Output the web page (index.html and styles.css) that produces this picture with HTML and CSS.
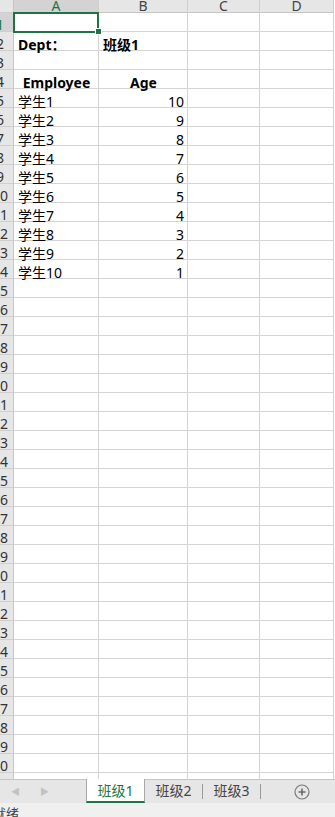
FILE: index.html
```html
<!DOCTYPE html>
<html>
<head>
  <title>班级1 - Sheet</title>
  <link rel="stylesheet" href="styles.css">
</head>
<body>
  <div class="sheet">
    <div class="row head-row">
      <div class="cell rh corner"></div>
      <div class="cell ch col-a selected-head">A</div>
      <div class="cell ch col-b">B</div>
      <div class="cell ch col-c">C</div>
      <div class="cell ch col-d">D</div>
    </div>

    <div class="row">
      <div class="cell rh selected-head"><span>1</span></div>
      <div class="cell col-a active-cell"></div>
      <div class="cell col-b"></div>
      <div class="cell col-c"></div>
      <div class="cell col-d"></div>
    </div>
    <div class="row">
      <div class="cell rh"><span>2</span></div>
      <div class="cell col-a bold">Dept：</div>
      <div class="cell col-b bold">班级1</div>
      <div class="cell col-c"></div>
      <div class="cell col-d"></div>
    </div>
    <div class="row">
      <div class="cell rh"><span>3</span></div>
      <div class="cell col-a"></div>
      <div class="cell col-b"></div>
      <div class="cell col-c"></div>
      <div class="cell col-d"></div>
    </div>
    <div class="row">
      <div class="cell rh"><span>4</span></div>
      <div class="cell col-a bold center">Employee</div>
      <div class="cell col-b bold center">Age</div>
      <div class="cell col-c"></div>
      <div class="cell col-d"></div>
    </div>
    <div class="row"><div class="cell rh"><span>5</span></div><div class="cell col-a">学生1</div><div class="cell col-b num">10</div><div class="cell col-c"></div><div class="cell col-d"></div></div>
    <div class="row"><div class="cell rh"><span>6</span></div><div class="cell col-a">学生2</div><div class="cell col-b num">9</div><div class="cell col-c"></div><div class="cell col-d"></div></div>
    <div class="row"><div class="cell rh"><span>7</span></div><div class="cell col-a">学生3</div><div class="cell col-b num">8</div><div class="cell col-c"></div><div class="cell col-d"></div></div>
    <div class="row"><div class="cell rh"><span>8</span></div><div class="cell col-a">学生4</div><div class="cell col-b num">7</div><div class="cell col-c"></div><div class="cell col-d"></div></div>
    <div class="row"><div class="cell rh"><span>9</span></div><div class="cell col-a">学生5</div><div class="cell col-b num">6</div><div class="cell col-c"></div><div class="cell col-d"></div></div>
    <div class="row"><div class="cell rh"><span>10</span></div><div class="cell col-a">学生6</div><div class="cell col-b num">5</div><div class="cell col-c"></div><div class="cell col-d"></div></div>
    <div class="row"><div class="cell rh"><span>11</span></div><div class="cell col-a">学生7</div><div class="cell col-b num">4</div><div class="cell col-c"></div><div class="cell col-d"></div></div>
    <div class="row"><div class="cell rh"><span>12</span></div><div class="cell col-a">学生8</div><div class="cell col-b num">3</div><div class="cell col-c"></div><div class="cell col-d"></div></div>
    <div class="row"><div class="cell rh"><span>13</span></div><div class="cell col-a">学生9</div><div class="cell col-b num">2</div><div class="cell col-c"></div><div class="cell col-d"></div></div>
    <div class="row"><div class="cell rh"><span>14</span></div><div class="cell col-a">学生10</div><div class="cell col-b num">1</div><div class="cell col-c"></div><div class="cell col-d"></div></div>
    <div class="row"><div class="cell rh"><span>15</span></div><div class="cell col-a"></div><div class="cell col-b"></div><div class="cell col-c"></div><div class="cell col-d"></div></div>
    <div class="row"><div class="cell rh"><span>16</span></div><div class="cell col-a"></div><div class="cell col-b"></div><div class="cell col-c"></div><div class="cell col-d"></div></div>
    <div class="row"><div class="cell rh"><span>17</span></div><div class="cell col-a"></div><div class="cell col-b"></div><div class="cell col-c"></div><div class="cell col-d"></div></div>
    <div class="row"><div class="cell rh"><span>18</span></div><div class="cell col-a"></div><div class="cell col-b"></div><div class="cell col-c"></div><div class="cell col-d"></div></div>
    <div class="row"><div class="cell rh"><span>19</span></div><div class="cell col-a"></div><div class="cell col-b"></div><div class="cell col-c"></div><div class="cell col-d"></div></div>
    <div class="row"><div class="cell rh"><span>20</span></div><div class="cell col-a"></div><div class="cell col-b"></div><div class="cell col-c"></div><div class="cell col-d"></div></div>
    <div class="row"><div class="cell rh"><span>21</span></div><div class="cell col-a"></div><div class="cell col-b"></div><div class="cell col-c"></div><div class="cell col-d"></div></div>
    <div class="row"><div class="cell rh"><span>22</span></div><div class="cell col-a"></div><div class="cell col-b"></div><div class="cell col-c"></div><div class="cell col-d"></div></div>
    <div class="row"><div class="cell rh"><span>23</span></div><div class="cell col-a"></div><div class="cell col-b"></div><div class="cell col-c"></div><div class="cell col-d"></div></div>
    <div class="row"><div class="cell rh"><span>24</span></div><div class="cell col-a"></div><div class="cell col-b"></div><div class="cell col-c"></div><div class="cell col-d"></div></div>
    <div class="row"><div class="cell rh"><span>25</span></div><div class="cell col-a"></div><div class="cell col-b"></div><div class="cell col-c"></div><div class="cell col-d"></div></div>
    <div class="row"><div class="cell rh"><span>26</span></div><div class="cell col-a"></div><div class="cell col-b"></div><div class="cell col-c"></div><div class="cell col-d"></div></div>
    <div class="row"><div class="cell rh"><span>27</span></div><div class="cell col-a"></div><div class="cell col-b"></div><div class="cell col-c"></div><div class="cell col-d"></div></div>
    <div class="row"><div class="cell rh"><span>28</span></div><div class="cell col-a"></div><div class="cell col-b"></div><div class="cell col-c"></div><div class="cell col-d"></div></div>
    <div class="row"><div class="cell rh"><span>29</span></div><div class="cell col-a"></div><div class="cell col-b"></div><div class="cell col-c"></div><div class="cell col-d"></div></div>
    <div class="row"><div class="cell rh"><span>30</span></div><div class="cell col-a"></div><div class="cell col-b"></div><div class="cell col-c"></div><div class="cell col-d"></div></div>
    <div class="row"><div class="cell rh"><span>31</span></div><div class="cell col-a"></div><div class="cell col-b"></div><div class="cell col-c"></div><div class="cell col-d"></div></div>
    <div class="row"><div class="cell rh"><span>32</span></div><div class="cell col-a"></div><div class="cell col-b"></div><div class="cell col-c"></div><div class="cell col-d"></div></div>
    <div class="row"><div class="cell rh"><span>33</span></div><div class="cell col-a"></div><div class="cell col-b"></div><div class="cell col-c"></div><div class="cell col-d"></div></div>
    <div class="row"><div class="cell rh"><span>34</span></div><div class="cell col-a"></div><div class="cell col-b"></div><div class="cell col-c"></div><div class="cell col-d"></div></div>
    <div class="row"><div class="cell rh"><span>35</span></div><div class="cell col-a"></div><div class="cell col-b"></div><div class="cell col-c"></div><div class="cell col-d"></div></div>
    <div class="row"><div class="cell rh"><span>36</span></div><div class="cell col-a"></div><div class="cell col-b"></div><div class="cell col-c"></div><div class="cell col-d"></div></div>
    <div class="row"><div class="cell rh"><span>37</span></div><div class="cell col-a"></div><div class="cell col-b"></div><div class="cell col-c"></div><div class="cell col-d"></div></div>
    <div class="row"><div class="cell rh"><span>38</span></div><div class="cell col-a"></div><div class="cell col-b"></div><div class="cell col-c"></div><div class="cell col-d"></div></div>
    <div class="row"><div class="cell rh"><span>39</span></div><div class="cell col-a"></div><div class="cell col-b"></div><div class="cell col-c"></div><div class="cell col-d"></div></div>
    <div class="row"><div class="cell rh"><span>40</span></div><div class="cell col-a"></div><div class="cell col-b"></div><div class="cell col-c"></div><div class="cell col-d"></div></div>
    <div class="row"><div class="cell rh"><span>41</span></div><div class="cell col-a"></div><div class="cell col-b"></div><div class="cell col-c"></div><div class="cell col-d"></div></div>
  </div>

  <div class="tab-bar">
    <div class="tab-nav">
      <span class="arrow">&#9664;</span>
      <span class="arrow">&#9654;</span>
    </div>
    <div class="tab active">班级1</div>
    <div class="tab">班级2</div>
    <div class="tab-sep"></div>
    <div class="tab">班级3</div>
    <div class="tab-sep"></div>
    <div class="tab-add">
      <svg width="16" height="16" viewBox="0 0 16 16">
        <circle cx="8" cy="8" r="7" fill="none" stroke="#7a7a7a" stroke-width="1.2"/>
        <path d="M8 4.5v7M4.5 8h7" stroke="#6a6a6a" stroke-width="1.6"/>
      </svg>
    </div>
  </div>

  <div class="status-bar"><span class="status-text">就绪</span></div>
</body>
</html>
```

FILE: styles.css
```css
/* spreadsheet look */
body {
  margin: 0;
  font-family: "Noto Sans", "Noto Sans CJK SC", sans-serif;
  font-size: 14px;
  color: #000;
  background: #fff;
  overflow: hidden;
}

.sheet {
  height: 779px;
  overflow: hidden;
}

.row {
  display: flex;
  height: 19px;
}

.cell {
  box-sizing: border-box;
  flex: none;
  height: 100%;
  border-right: 1px solid #d4d4d4;
  border-bottom: 1px solid #d4d4d4;
  line-height: 20px;
  padding: 3px 3px 0 4px;
  white-space: nowrap;
}

.col-a { width: 85px; }
.col-b { width: 89px; }
.col-c { width: 72px; }
.col-d { width: 74px; }

.bold {
  font-weight: bold;
}

.center {
  text-align: center;
}

.num {
  text-align: right;
}

/* row headers, scrolled so only the right half shows */
.rh {
  width: 14px;
  padding: 0;
  background: #e6e6e6;
  border-right: 1px solid #c6c6c6;
  border-bottom: 1px solid #cfcfcf;
  color: #333;
  font-size: 14px;
  line-height: 24px;
  overflow: hidden;
}

.rh span {
  display: block;
  width: 26px;
  margin-left: -13px;
  text-align: center;
}

/* column headers */
.head-row {
  height: 13px;
}

.ch {
  background: #e6e6e6;
  border-right: 1px solid #cfcfcf;
  border-bottom: 1px solid #c6c6c6;
  line-height: 12px;
  font-size: 14px;
  text-align: center;
  color: #444;
  padding: 0;
}

.corner {
  background: #e6e6e6;
}

.selected-head {
  background: #d3d3d3;
  color: #217346;
}

.ch.selected-head {
  border-bottom: 1px solid #217346;
}

.rh.selected-head {
  border-right: 1px solid #217346;
}

/* selected cell A1 */
.active-cell {
  position: relative;
}

.active-cell::after {
  content: "";
  position: absolute;
  top: -1px;
  left: -1px;
  right: -1px;
  bottom: -2px;
  border: 2px solid #217346;
}

.active-cell::before {
  content: "";
  position: absolute;
  right: -4px;
  bottom: -4px;
  width: 5px;
  height: 5px;
  background: #217346;
  border: 1px solid #fff;
  z-index: 2;
}

/* sheet tabs */
.tab-bar {
  display: flex;
  height: 24px;
  background: #e6e6e6;
  border-top: 1px solid #c6c6c6;
  box-sizing: border-box;
}

.tab-nav {
  width: 86px;
  display: flex;
  align-items: center;
  gap: 20px;
  padding-left: 11px;
  box-sizing: border-box;
  color: #c2c2c2;
  font-size: 9px;
}

.tab {
  width: 57px;
  box-sizing: border-box;
  text-align: center;
  line-height: 22px;
  font-size: 14px;
  color: #444;
}

.tab.active {
  width: 59px;
  margin-top: -1px;
  height: 24px;
  background: #fff;
  color: #217346;
  border-left: 1px solid #a8a8a8;
  border-right: 1px solid #a8a8a8;
  border-bottom: 2px solid #217346;
  line-height: 23px;
}

.tab-sep {
  width: 1px;
  height: 15px;
  margin-top: 4px;
  background: #9a9a9a;
}

.tab-add {
  flex: 1;
  display: flex;
  align-items: center;
  justify-content: center;
  padding-left: 8px;
}

.status-bar {
  height: 14px;
  background: #f0f0f0;
  overflow: hidden;
}

.status-text {
  display: block;
  margin-left: -7px;
  font-size: 13px;
  line-height: 20px;
  color: #444;
}
```
